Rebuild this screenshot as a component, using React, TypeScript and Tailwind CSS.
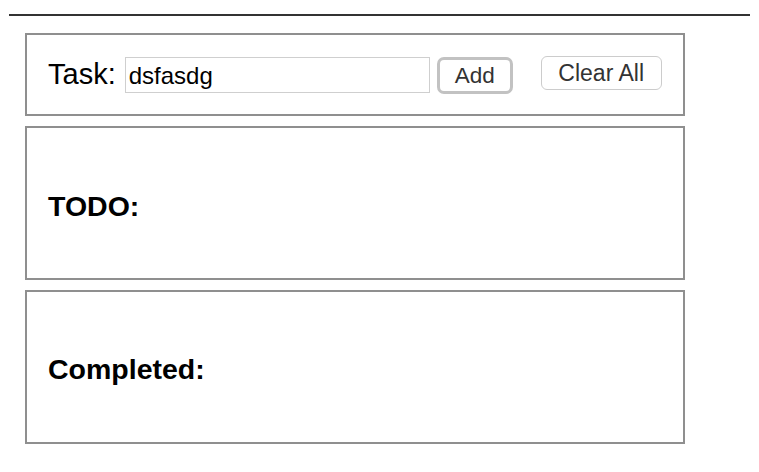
import React from "react";

export default function App() {
  return (
    <div
      className="w-[759px] h-[472px] bg-white px-[9px] pt-[14px]"
      style={{ fontFamily: '"Liberation Sans", Arial, Helvetica, sans-serif' }}
    >
      <div className="h-[2px] bg-[#333333]" />
      <div className="ml-[16px] mt-[17px] w-[660px] flex flex-col gap-[10px]">
        <div className="h-[83px] border-2 border-[#8f8f8f] flex items-center pl-[21px]">
          <span className="text-[29px] leading-[31px] text-black">Task:</span>
          <div className="ml-[9px] w-[305px] h-[36px] border border-[#cfcfcf] flex items-center pl-[3px] pt-[2px]">
            <span className="text-[24px] leading-[28px] text-black">dsfasdg</span>
          </div>
          <button className="ml-[7px] mt-[2px] w-[76px] h-[37px] border-[3px] border-[#c2c2c2] rounded-[7px] bg-white flex items-center justify-center">
            <span className="text-[22.5px] leading-[26px] text-[#333333]">Add</span>
          </button>
          <button className="ml-[28px] mb-[4px] w-[121px] h-[34px] border border-[#cccccc] rounded-[6px] bg-white flex items-center justify-center">
            <span className="text-[23px] leading-[26px] text-[#333333]">Clear All</span>
          </button>
        </div>
        <div className="h-[154px] border-2 border-[#8f8f8f] flex items-center pl-[21px] pt-[6px]">
          <span className="text-[28.5px] leading-[32px] font-bold text-black">TODO:</span>
        </div>
        <div className="h-[154px] border-2 border-[#8f8f8f] flex items-center pl-[21px] pt-[4px]">
          <span className="text-[28.5px] leading-[32px] font-bold text-black">Completed:</span>
        </div>
      </div>
    </div>
  );
}
